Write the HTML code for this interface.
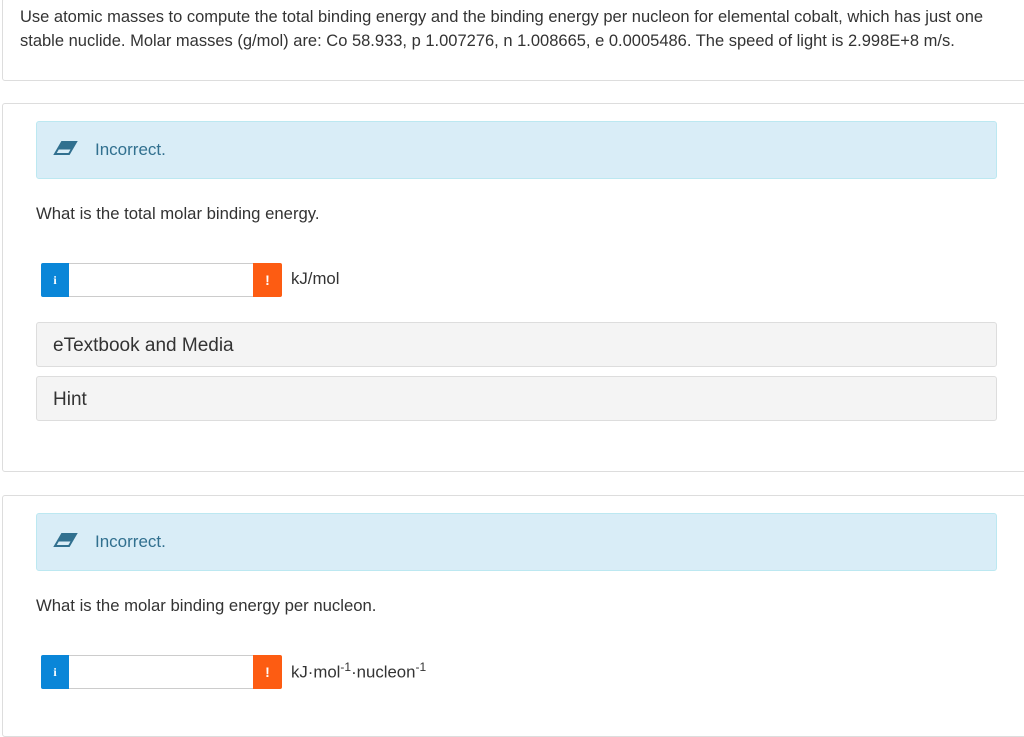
<!DOCTYPE html>
<html><head><style>
body{margin:0;width:1024px;height:719px;overflow:hidden;background:#fff;font-family:"Liberation Sans",sans-serif;color:#333;position:relative}
.panel{position:absolute;left:2px;width:1030px;border:1px solid #ddd;border-radius:3px;background:#fff}
.abs{position:absolute}
.alert{position:absolute;left:36px;width:959px;height:56px;background:#d9edf7;border:1px solid #bce8f1;border-radius:3px;color:#31708f;font-size:17px}
.q{position:absolute;left:36px;font-size:16.7px;color:#333}
.ib{position:absolute;left:41px;width:28px;height:34px;background:#0a86d8;border-radius:2px 0 0 2px;color:#fff;font-weight:bold;font-size:12px;text-align:center;line-height:34px;font-family:"Liberation Serif",serif}
.inp{position:absolute;left:69px;width:184px;height:32px;border:1px solid #ccc;border-left:none;border-right:none;background:#fff}
.eb{position:absolute;left:253px;width:29px;height:34px;background:#fd5c12;border-radius:0 2px 2px 0;color:#fff;font-weight:bold;font-size:14px;text-align:center;line-height:34px}
.unit{position:absolute;left:291px;font-size:16.8px}
.box{position:absolute;left:36px;height:43px;background:#f4f4f4;border:1px solid #ddd;border-radius:3px;font-size:19px;line-height:45px;padding-left:16px;width:943px}
</style></head><body>
<div class="panel" style="top:-2px;height:81px"></div>
<div class="abs" style="left:20px;top:5px;font-size:16.5px;line-height:24px;width:1000px;white-space:nowrap">Use atomic masses to compute the total binding energy and the binding energy per nucleon for elemental cobalt, which has just one<br>stable nuclide. Molar masses (g/mol) are: Co 58.933, p 1.007276, n 1.008665, e 0.0005486. The speed of light is 2.998E+8 m/s.</div>

<div class="panel" style="top:103px;height:367px"></div>
<div class="alert" style="top:121px"><svg class="abs" style="left:16px;top:18px" width="26" height="18" viewBox="0 0 26 18"><path d="M9 2 L23 2 L16 14 L2 14 Z" fill="none" stroke="#31708f" stroke-width="2"/><path d="M9 2 L23 2 L18.5 9.5 L4.5 9.5 Z" fill="#31708f"/></svg><span class="abs" style="left:58px;top:18px">Incorrect.</span></div>
<div class="q" style="top:204px">What is the total molar binding energy.</div>
<div class="ib" style="top:263px">i</div><div class="inp" style="top:263px"></div><div class="eb" style="top:263px">!</div>
<div class="unit" style="top:269px">kJ/mol</div>
<div class="box" style="top:322px">eTextbook and Media</div>
<div class="box" style="top:376px">Hint</div>

<div class="panel" style="top:495px;height:240px"></div>
<div class="alert" style="top:513px"><svg class="abs" style="left:16px;top:18px" width="26" height="18" viewBox="0 0 26 18"><path d="M9 2 L23 2 L16 14 L2 14 Z" fill="none" stroke="#31708f" stroke-width="2"/><path d="M9 2 L23 2 L18.5 9.5 L4.5 9.5 Z" fill="#31708f"/></svg><span class="abs" style="left:58px;top:18px">Incorrect.</span></div>
<div class="q" style="top:596px">What is the molar binding energy per nucleon.</div>
<div class="ib" style="top:655px">i</div><div class="inp" style="top:655px"></div><div class="eb" style="top:655px">!</div>
<div class="unit" style="top:660px">kJ·mol<sup style="font-size:12px">-1</sup>·nucleon<sup style="font-size:12px">-1</sup></div>
</body></html>
